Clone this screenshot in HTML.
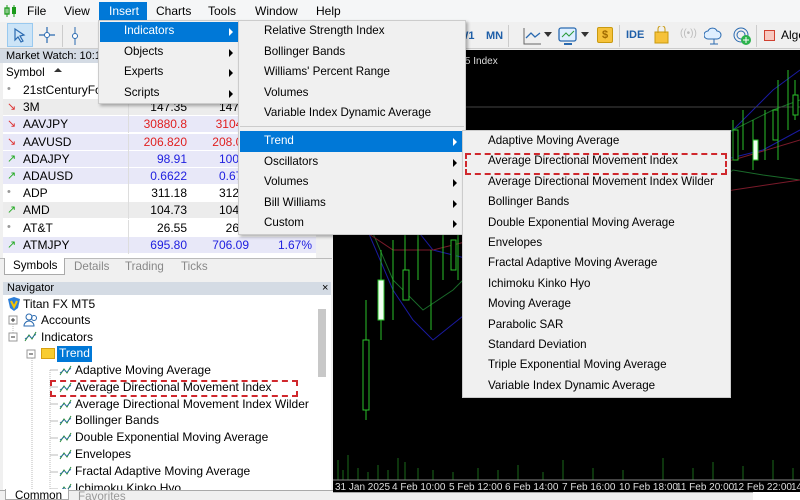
<!DOCTYPE html>
<html><head><meta charset="utf-8"><style>
*{margin:0;padding:0;box-sizing:border-box}
html,body{width:800px;height:500px;overflow:hidden}
body{background:#f0f0f0;font-family:"Liberation Sans",sans-serif;font-size:11.6px;color:#000;position:relative}
.a{position:absolute;white-space:nowrap}
.menu{background:#f0f0f0;border:1px solid #ccc;box-shadow:2px 2px 3px rgba(0,0,0,.3)}
.hl{background:#0078d7;color:#fff}
.arr{position:absolute;width:0;height:0;border-left:4px solid #000;border-top:4px solid transparent;border-bottom:4px solid transparent}
.arr.w{border-left-color:#fff}
.dash{position:absolute;border:2px dashed #d0282d}
</style></head><body>
<div class="a" style="left:0;top:0;width:800px;height:22px;background:#f5f6f7"></div>
<svg class="a" style="left:4px;top:5px" width="14" height="12"><rect x="1" y="3" width="4" height="6" fill="none" stroke="#1a9a1a" stroke-width="1.3"/><rect x="8" y="2" width="4" height="7" fill="#1a9a1a"/><path d="M3 0v12M10 0v12" stroke="#1a9a1a"/></svg>
<div class="a" style="left:27px;top:4px;font-size:12px">File</div>
<div class="a" style="left:64px;top:4px;font-size:12px">View</div>
<div class="a hl" style="left:99px;top:2px;width:48px;height:19px;padding:2px 0 0 10px;font-size:12px">Insert</div>
<div class="a" style="left:156px;top:4px;font-size:12px">Charts</div>
<div class="a" style="left:208px;top:4px;font-size:12px">Tools</div>
<div class="a" style="left:255px;top:4px;font-size:12px">Window</div>
<div class="a" style="left:316px;top:4px;font-size:12px">Help</div>
<div class="a" style="left:0;top:22px;width:800px;height:27px;background:#f0f0f0;border-bottom:1px solid #ccc"></div>
<div class="a" style="left:7px;top:23px;width:26px;height:24px;background:#cce4f7;border:1px solid #99c9ef"></div>
<svg class="a" style="left:12px;top:27px" width="16" height="16"><path d="M3 2l9 6-4 1 3 5-2 1-3-5-3 3z" fill="none" stroke="#2a6ab0" stroke-width="1.2"/></svg>
<svg class="a" style="left:38px;top:26px" width="18" height="18"><path d="M9 1v16M1 9h16" stroke="#2a6ab0" stroke-width="1.2"/><circle cx="9" cy="9" r="2.5" fill="#fff" stroke="#2a6ab0"/></svg>
<div class="a" style="left:62px;top:25px;width:1px;height:22px;background:#ccc"></div>
<svg class="a" style="left:70px;top:26px" width="10" height="20"><path d="M5 1v18" stroke="#2a6ab0"/><circle cx="5" cy="10" r="2.5" fill="#fff" stroke="#2a6ab0"/></svg>
<div class="a" style="left:458px;top:30px;color:#1f5fa8;font-weight:bold;font-size:11px">W1</div>
<div class="a" style="left:486px;top:30px;color:#1f5fa8;font-weight:bold;font-size:11px">MN</div>
<div class="a" style="left:508px;top:25px;width:1px;height:22px;background:#ccc"></div>
<svg class="a" style="left:522px;top:27px" width="20" height="18"><path d="M2 1v16h17" stroke="#666" fill="none"/><path d="M4 11l5-5 4 4 5-4" stroke="#2a6ab0" fill="none" stroke-width="1.3"/></svg>
<div class="arr" style="left:544px;top:32px;border:4px solid transparent;border-top:5px solid #333;border-bottom:none"></div>
<svg class="a" style="left:558px;top:26px" width="20" height="20"><rect x="1" y="2" width="17" height="13" rx="2" fill="#dfefff" stroke="#2a6ab0" stroke-width="1.3"/><path d="M4 11l4-4 3 3 5-5" stroke="#2a9a3a" fill="none"/><path d="M6 18h8" stroke="#2a6ab0" stroke-width="2"/></svg>
<div class="arr" style="left:581px;top:32px;border:4px solid transparent;border-top:5px solid #333;border-bottom:none"></div>
<div class="a" style="left:597px;top:27px;width:16px;height:16px;background:#f6c23a;border:1px solid #c99a10;border-radius:2px;font-size:11px;color:#a06a00;text-align:center;font-weight:bold;line-height:14px">$</div>
<div class="a" style="left:619px;top:25px;width:1px;height:22px;background:#ccc"></div>
<div class="a" style="left:626px;top:29px;color:#1f5fa8;font-weight:bold;font-size:11px">IDE</div>
<svg class="a" style="left:654px;top:26px" width="16" height="18"><rect x="1" y="6" width="13" height="11" fill="#f6c23a" stroke="#c99a10"/><path d="M4 7V3a3.5 3.5 0 017 0v4" fill="none" stroke="#c99a10"/></svg>
<div class="a" style="left:680px;top:28px;color:#bbb;font-size:10px">((•))</div>
<svg class="a" style="left:704px;top:27px" width="20" height="18"><path d="M4 12a4 4 0 010-8 5 5 0 019 0 4 4 0 010 8z" fill="#dfefff" stroke="#2a6ab0"/><path d="M10 12v5M6 17h8" stroke="#2a6ab0"/></svg>
<svg class="a" style="left:732px;top:26px" width="20" height="20"><circle cx="9" cy="9" r="7" fill="none" stroke="#2a6ab0"/><circle cx="9" cy="9" r="4" fill="none" stroke="#2a6ab0"/><circle cx="14" cy="14" r="5" fill="#2bb24c"/><path d="M14 11v6M11 14h6" stroke="#fff"/></svg>
<div class="a" style="left:756px;top:25px;width:1px;height:22px;background:#ccc"></div>
<div class="a" style="left:764px;top:30px;width:11px;height:11px;background:#f8c8c0;border:1px solid #d04030"></div>
<div class="a" style="left:781px;top:28px;font-size:12px">Algo</div>

<div class="a" style="left:0;top:49px;width:332px;height:14px;background:#d4dbe4;font-size:11px;padding:1px 0 0 6px">Market Watch: 10:19</div>
<div class="a" style="left:3px;top:63px;width:313px;height:196px;background:#fff"></div>
<div class="a" style="left:6px;top:66px">Symbol</div>
<div class="a" style="left:54px;top:68px;border:4px solid transparent;border-bottom:4px solid #333;border-top:none"></div>
<div id="mw"></div>
<div class="a" style="left:0;top:258px;width:332px;height:18px;background:#f0f0f0;border-top:1px solid #bbb"></div>
<div class="a" style="left:4px;top:258px;width:61px;height:17px;background:#fff;border:1px solid #aaa;border-top:none;padding:1px 0 0 8px">Symbols</div>
<div class="a" style="left:74px;top:260px;color:#888">Details</div>
<div class="a" style="left:125px;top:260px;color:#888">Trading</div>
<div class="a" style="left:181px;top:260px;color:#888">Ticks</div>

<div class="a" style="left:3px;top:282px;width:328px;height:13px;background:#d4dbe4;font-size:11px;padding:0 0 0 4px">Navigator</div>
<div class="a" style="left:322px;top:282px;font-size:11px">×</div>
<div class="a" style="left:3px;top:295px;width:328px;height:195px;background:#fff"></div>
<div class="a" style="left:318px;top:309px;width:8px;height:68px;background:#c8c8c8"></div>
<svg class="a" style="left:6px;top:296px" width="16" height="16"><path d="M2 3l6-2 6 2-2 9-4 3-4-3z" fill="#2f7fd8"/><path d="M5 5l3 6 3-6" stroke="#f5c400" stroke-width="2" fill="none"/></svg>
<div class="a" style="left:23px;top:297px;font-size:12px">Titan FX MT5</div>
<svg class="a" style="left:0;top:310px" width="120" height="180"><path d="M13 10v20M32 46v134M50 60v120" stroke="#bbb" stroke-dasharray="1 1" fill="none"/><g fill="#fff" stroke="#999"><rect x="9" y="6" width="8" height="8"/><rect x="9" y="23" width="8" height="8"/><rect x="27" y="40" width="8" height="8"/></g><path d="M11 10h4M13 8v4M11 27h4M29 44h4" stroke="#333"/><path d="M50 60h8M50 77h8M50 94h8M50 111h8M50 128h8M50 145h8M50 162h8M50 179h8" stroke="#bbb"/></svg>
<svg class="a" style="left:23px;top:312px" width="16" height="16"><circle cx="6" cy="5" r="3" fill="none" stroke="#2a6ab0"/><path d="M1 14a5 5 0 0110 0z" fill="none" stroke="#2a6ab0"/><circle cx="11" cy="6" r="2.5" fill="none" stroke="#2a6ab0"/></svg>
<div class="a" style="left:41px;top:313px;font-size:12px">Accounts</div>
<svg class="a" style="left:24px;top:331px" width="14" height="12"><path d="M1 10l4-6 3 4 4-7" stroke="#2a8a3a" fill="none"/><path d="M1 8l4-3 3 2 4-4" stroke="#2a6ab0" fill="none" stroke-dasharray="2 1"/></svg>
<div class="a" style="left:41px;top:330px;font-size:12px">Indicators</div>
<div class="a" style="left:41px;top:348px;width:14px;height:11px;background:#f8cc30;border:1px solid #d8a010"></div>
<div class="a" style="left:57px;top:346px;background:#0078d7;color:#fff;padding:0 2px;font-size:12px;height:16px">Trend</div>
<div id="nav"></div>
<div class="dash" style="left:50px;top:380px;width:248px;height:17px"></div>
<div class="a" style="left:0;top:490px;width:333px;height:10px;background:#f0f0f0;border-top:1px solid #aaa"></div>
<div class="a" style="left:5px;top:489px;width:64px;height:11px;background:#fff;border:1px solid #aaa;border-top:none;padding:0 0 0 9px;line-height:14px;overflow:hidden">Common</div>
<div class="a" style="left:78px;top:491px;color:#999;line-height:12px;height:9px;overflow:hidden">Favorites</div>

<svg class="a" style="left:333px;top:50px" width="467" height="442">
<rect width="467" height="442" fill="#000"/>
<text x="113" y="14" fill="#ddd" font-size="10" font-family="Liberation Sans">ds 25 Index</text>
<polyline fill="none" stroke="#1a1aa0" points="0,50 10,60 30,90 60,150 100,200 140,210 200,220 260,190 300,160 340,120 370,100 400,80 440,40 467,20"/>
<polyline fill="none" stroke="#1a1aa0" points="0,110 30,170 60,240 80,270 100,290 150,250 200,170 260,150 300,130 340,120 390,110 430,100 467,80"/>
<polyline fill="none" stroke="#1a6a2a" points="0,20 20,60 50,110 80,150 100,160 140,150 200,140 260,130 300,110 340,100 400,80 440,60 467,50"/>
<polyline fill="none" stroke="#1a6a2a" points="0,100 30,160 60,230 90,260 120,240 160,200 200,190 260,170 300,160 340,165 400,120 430,125 467,130"/>
<polyline fill="none" stroke="#7a1a2a" points="0,60 30,100 60,150 100,170 140,160 200,150 260,150 300,140 340,120 400,110 467,90"/>
<polyline fill="none" stroke="#7a1a2a" points="0,160 30,180 60,200 100,200 140,190 200,180 260,170 320,160 400,140 467,130"/>
<path d="M0 57h467" stroke="#444"/>
<g stroke="#2ac02a" fill="#000">
<path d="M33 250v120M48 200v90M60 190v80M72 180v60M85 170v60M98 200v80M110 170v60M125 170v60M135 160v40M150 150v40M165 150v40M180 160v50M200 150v50M215 130v40M230 140v60M240 120v60M250 110v60M260 120v50M270 120v50M290 120v60M300 110v50M310 100v50M320 110v50M330 120v60M345 100v40M360 100v30M372 90v40M385 80v60M400 70v40M410 60v40M420 70v50M432 60v50M445 30v80M455 20v60M462 30v40"/>
<rect x="30" y="290" width="6" height="70"/><rect x="45" y="230" width="6" height="40" fill="#f0fff0"/><rect x="70" y="220" width="6" height="30"/><rect x="118" y="190" width="5" height="30"/><rect x="148" y="170" width="5" height="20" fill="#f0fff0"/><rect x="198" y="165" width="5" height="25"/><rect x="238" y="140" width="5" height="30" fill="#f0fff0"/><rect x="268" y="140" width="5" height="25"/><rect x="298" y="125" width="5" height="20" fill="#f0fff0"/><rect x="328" y="140" width="5" height="25"/><rect x="370" y="100" width="5" height="25"/><rect x="400" y="80" width="5" height="30"/><rect x="420" y="90" width="5" height="20" fill="#f0fff0"/><rect x="440" y="60" width="5" height="30"/><rect x="460" y="45" width="5" height="20"/>
</g>
<g stroke="#1a6a1a"><path d="M5 430v-20M10 430v-10M15 430v-25M25 430v-12M35 430v-8M45 430v-15M55 430v-10M65 430v-22M72 430v-18M85 430v-12M100 430v-10M120 430v-8M145 430v-12M165 430v-10M185 430v-15M210 430v-8M230 430v-20M260 430v-12M290 430v-10M330 430v-22M360 430v-12M380 430v-18M410 430v-14M440 430v-20M460 430v-12"/></g>
<path d="M0 430h467" stroke="#888"/>
<g fill="#ddd" font-size="10" font-family="Liberation Sans"><text x="2" y="440">31 Jan 2025</text><text x="59" y="440">4 Feb 10:00</text><text x="116" y="440">5 Feb 12:00</text><text x="172" y="440">6 Feb 14:00</text><text x="229" y="440">7 Feb 16:00</text><text x="286" y="440">10 Feb 18:00</text><text x="343" y="440">11 Feb 20:00</text><text x="400" y="440">12 Feb 22:00</text><text x="458" y="440">14</text></g>
</svg>
<div class="a" style="left:333px;top:492px;width:467px;height:8px;background:#f0f0f0;border-top:1px solid #aaa"></div>
<div class="a" style="left:753px;top:492px;width:47px;height:8px;background:#fff"></div>

<div class="a menu" style="left:98px;top:20px;width:141px;height:84px"></div>
<div class="a hl" style="left:100px;top:22px;width:138px;height:20px"></div>
<div class="a" style="left:124px;top:24px;color:#fff">Indicators</div>
<div class="arr w" style="left:229px;top:28px"></div>
<div class="a" style="left:124px;top:45px">Objects</div><div class="arr" style="left:229px;top:49px"></div>
<div class="a" style="left:124px;top:65px">Experts</div><div class="arr" style="left:229px;top:69px"></div>
<div class="a" style="left:124px;top:86px">Scripts</div><div class="arr" style="left:229px;top:90px"></div>

<div class="a menu" style="left:238px;top:20px;width:228px;height:215px"></div>
<div class="a" style="left:240px;top:126px;width:224px;height:1px;background:#ccc"></div>
<div class="a hl" style="left:240px;top:131px;width:224px;height:21px"></div>
<div id="ind"></div>

<div class="a menu" style="left:462px;top:130px;width:269px;height:268px"></div>
<div id="tr"></div>
<div class="dash" style="left:465px;top:153px;width:262px;height:22px"></div>

<script>
function add(id,h){document.getElementById(id).outerHTML=h}
var rows=[["21stCenturyFox","","","","#fff","•","#999","#000"],["3M","147.35","147.4","","#ececec","↘","#d33","#000"],["AAVJPY","30880.8","31046","","#e8e8f8","↘","#d33","#e02020"],["AAVUSD","206.820","208.05","","#e8e8f8","↘","#d33","#e02020"],["ADAJPY","98.91","100.0","","#e8e8f8","↗","#2a2","#2020e0"],["ADAUSD","0.6622","0.670","","#e8e8f8","↗","#2a2","#2020e0"],["ADP","311.18","312.2","","#fff","•","#999","#000"],["AMD","104.73","104.7","","#ececec","↗","#2a2","#000"],["AT&T","26.55","26.6","","#fff","•","#999","#000"],["ATMJPY","695.80","706.09","1.67%","#e8e8f8","↗","#2a2","#2020e0"]];
var h="";rows.forEach(function(r,i){var y=82+i*17.2;
h+='<div class="a" style="left:3px;top:'+y+'px;width:313px;height:17px;background:'+r[4]+';border-bottom:1px solid #fff"></div>';
h+='<div class="a" style="left:7px;top:'+(y+1)+'px;color:'+r[6]+';font-size:11px">'+r[5]+'</div>';
h+='<div class="a" style="left:23px;top:'+(y+1)+'px;font-size:12px;width:104px;overflow:hidden">'+r[0]+'</div>';
h+='<div class="a" style="left:128px;top:'+y+'px;width:1px;height:17px;background:#ddd"></div>';
h+='<div class="a" style="left:128px;top:'+(y+1)+'px;width:59px;text-align:right;color:'+r[7]+';font-size:12px">'+r[1]+'</div>';
h+='<div class="a" style="left:190px;top:'+(y+1)+'px;width:59px;text-align:right;color:'+r[7]+';font-size:12px">'+r[2]+'</div>';
h+='<div class="a" style="left:252px;top:'+(y+1)+'px;width:60px;text-align:right;color:'+r[7]+';font-size:12px">'+r[3]+'</div>';});
add("mw",h);
var nav=["Adaptive Moving Average","Average Directional Movement Index","Average Directional Movement Index Wilder","Bollinger Bands","Double Exponential Moving Average","Envelopes","Fractal Adaptive Moving Average","Ichimoku Kinko Hyo"];
h="";nav.forEach(function(t,i){var y=363+i*16.8;h+='<svg class="a" style="left:59px;top:'+(y+2)+'px" width="14" height="12"><path d="M1 10l4-6 3 4 4-7" stroke="#2a8a3a" fill="none"/><path d="M1 8l4-3 3 2 4-4" stroke="#2a6ab0" fill="none" stroke-dasharray="2 1"/></svg><div class="a" style="left:75px;top:'+y+'px;font-size:12px">'+t+'</div>'});add("nav",h);
var ind=[["Relative Strength Index",24],["Bollinger Bands",45],["Williams' Percent Range",65],["Volumes",86],["Variable Index Dynamic Average",106],["Trend",134,1],["Oscillators",155,0,1],["Volumes",175,0,1],["Bill Williams",196,0,1],["Custom",216,0,1]];
h="";ind.forEach(function(r){h+='<div class="a" style="left:264px;top:'+r[1]+'px;color:'+(r[2]?'#fff':'#000')+'">'+r[0]+'</div>';if(r[2]||r[3])h+='<div class="arr'+(r[2]?' w':'')+'" style="left:453px;top:'+(r[1]+4)+'px"></div>'});add("ind",h);
var tr=["Adaptive Moving Average","Average Directional Movement Index","Average Directional Movement Index Wilder","Bollinger Bands","Double Exponential Moving Average","Envelopes","Fractal Adaptive Moving Average","Ichimoku Kinko Hyo","Moving Average","Parabolic SAR","Standard Deviation","Triple Exponential Moving Average","Variable Index Dynamic Average"];
h="";tr.forEach(function(t,i){h+='<div class="a" style="left:488px;top:'+(134+i*20.4)+'px">'+t+'</div>'});add("tr",h);
</script>
</body></html>
